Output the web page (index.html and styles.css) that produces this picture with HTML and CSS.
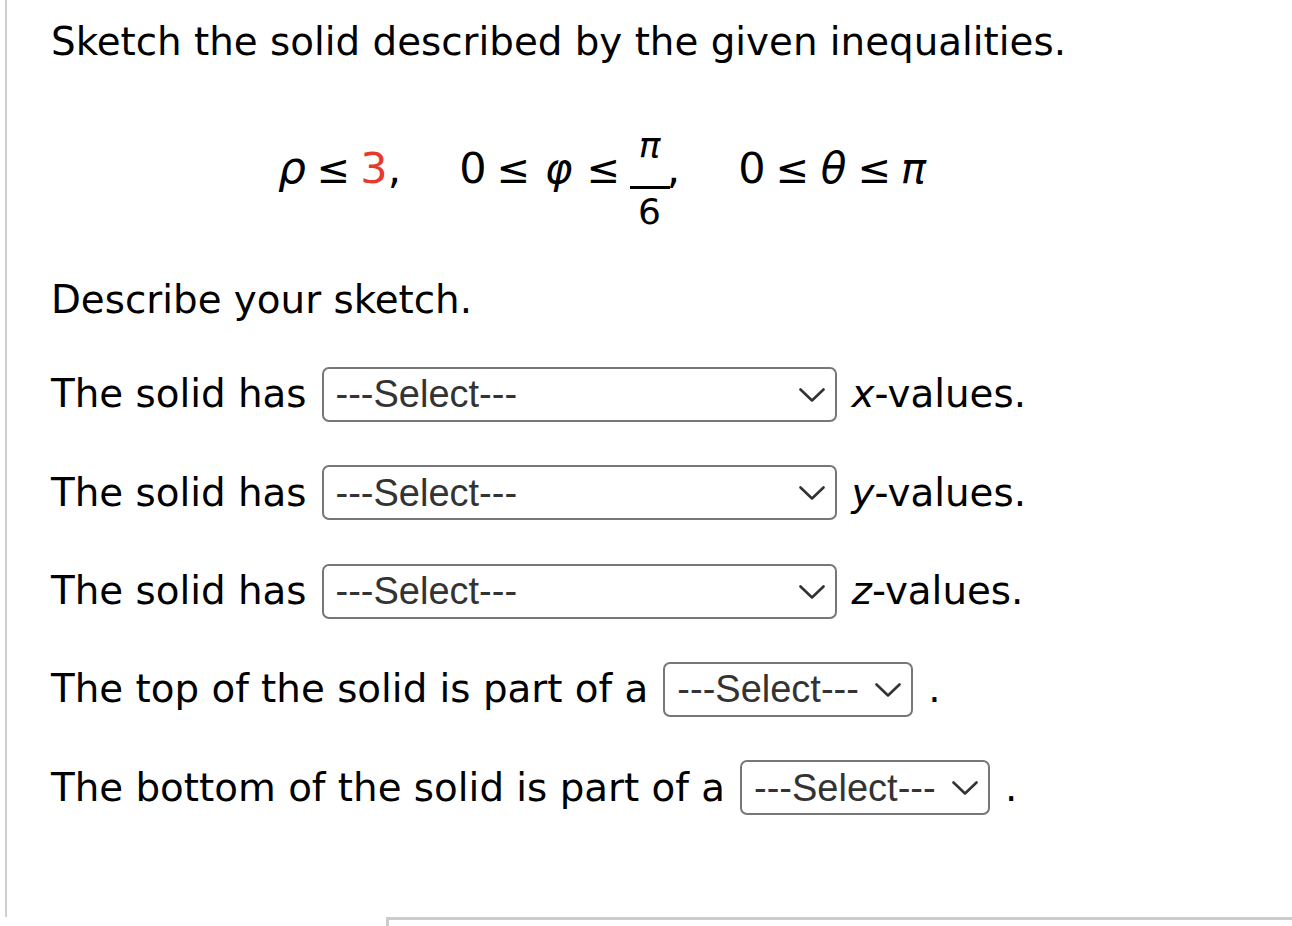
FILE: index.html
```html
<!DOCTYPE html>
<html lang="en">
<head>
<meta charset="utf-8">
<title>Sketch the solid</title>
<link rel="stylesheet" href="styles.css">
</head>
<body>
<div class="frame">
  <p class="title">Sketch the solid described by the given inequalities.</p>

  <div class="math">
    <span class="g w-rho first"><i>ρ</i></span><span class="g w-rel">≤</span><span class="g w-dig red">3</span><span class="g w-0">,</span><span class="g w-dig big">0</span><span class="g w-rel">≤</span><span class="g w-phi"><i>φ</i></span><span class="g w-rel">≤</span><span class="frac"><span class="num"><i>π</i></span><span class="bar"></span><span class="den">6</span></span><span class="g w-0 comma2">,</span><span class="g w-dig big">0</span><span class="g w-rel">≤</span><span class="g w-theta"><i>θ</i></span><span class="g w-rel">≤</span><span class="g w-pi"><i>π</i></span>
  </div>

  <p class="describe">Describe your sketch.</p>

  <div class="rows">
    <div class="row">
      <span class="label">The solid has</span>
      <span class="sel sel-wide">
        <select><option>---Select---</option></select>
        <svg class="chev" viewBox="0 0 26 14" aria-hidden="true"><path d="M1.5 1.5 L13 12.5 L24.5 1.5"/></svg>
      </span>
      <span class="label"><i>x</i>-values.</span>
    </div>
    <div class="row">
      <span class="label">The solid has</span>
      <span class="sel sel-wide">
        <select><option>---Select---</option></select>
        <svg class="chev" viewBox="0 0 26 14" aria-hidden="true"><path d="M1.5 1.5 L13 12.5 L24.5 1.5"/></svg>
      </span>
      <span class="label"><i>y</i>-values.</span>
    </div>
    <div class="row">
      <span class="label">The solid has</span>
      <span class="sel sel-wide">
        <select><option>---Select---</option></select>
        <svg class="chev" viewBox="0 0 26 14" aria-hidden="true"><path d="M1.5 1.5 L13 12.5 L24.5 1.5"/></svg>
      </span>
      <span class="label"><i>z</i>-values.</span>
    </div>
    <div class="row">
      <span class="label">The top of the solid is part of a</span>
      <span class="sel sel-small">
        <select><option>---Select---</option></select>
        <svg class="chev" viewBox="0 0 26 14" aria-hidden="true"><path d="M1.5 1.5 L13 12.5 L24.5 1.5"/></svg>
      </span>
      <span class="label dot">.</span>
    </div>
    <div class="row">
      <span class="label">The bottom of the solid is part of a</span>
      <span class="sel sel-small">
        <select><option>---Select---</option></select>
        <svg class="chev" viewBox="0 0 26 14" aria-hidden="true"><path d="M1.5 1.5 L13 12.5 L24.5 1.5"/></svg>
      </span>
      <span class="label dot">.</span>
    </div>
  </div>
</div>
<div class="footer"></div>
</body>
</html>
```

FILE: styles.css
```css
html, body {
  margin: 0;
  padding: 0;
  background: #ffffff;
}

body {
  font-family: "DejaVu Sans", Verdana, sans-serif;
  font-size: 38.8px;
  color: #000000;
  overflow: hidden;
}

.frame {
  box-sizing: border-box;
  height: 917px;
  margin-left: 5px;
  border-left: 2px solid #cfcfcf;
  padding-left: 44px;
  padding-top: 20px;
}

.title,
.describe {
  margin: 0;
  line-height: 44px;
  white-space: nowrap;
}

/* ---------- math line ---------- */
.math {
  margin-top: 63.5px;
  padding-left: 219.5px;
  font-size: 42px;
  line-height: 42px;
  white-space: nowrap;
}

.math i {
  font-style: italic;
}

.g {
  display: inline-flex;
  justify-content: center;
}

.w-rho { width: 43px; font-size: 44px; }
.w-rel { width: 40px; font-size: 40px; }
.w-dig { width: 41px; font-size: 43px; }
.w-phi { width: 50px; }
.w-theta { width: 42px; }
.w-pi { width: 38px; }
.w-0 { width: 0; }

.big { margin-left: 58px; }
.comma2 { margin-left: 4px; }

.red { color: #e8392b; }

.frac {
  display: inline-flex;
  flex-direction: column;
  align-items: center;
  width: 40px;
  margin-left: 6px;
  vertical-align: 25px;
}

.num,
.den {
  font-size: 36px;
  line-height: 36px;
}

.bar {
  align-self: stretch;
  height: 3px;
  background: #000;
  margin-top: 22.5px;
  margin-bottom: 4.5px;
}

.describe {
  margin-top: 48.35px;
}

/* ---------- answer rows ---------- */
.rows {
  margin-top: 45.15px;
  display: flex;
  flex-direction: column;
  gap: 43.33px;
}

.row {
  display: flex;
  align-items: center;
  gap: 15px;
  height: 55px;
  white-space: nowrap;
}

.label {
  line-height: 44px;
}

.sel {
  position: relative;
  display: inline-flex;
  flex: none;
}

.sel select {
  -webkit-appearance: none;
  appearance: none;
  box-sizing: border-box;
  height: 55px;
  margin: 0;
  padding: 0 0 0 12px;
  border: 2px solid #777777;
  border-radius: 7px;
  background: #ffffff;
  color: #333333;
  font-family: "Liberation Sans", Arial, sans-serif;
  font-size: 38px;
  outline: none;
}

.sel-wide select { width: 515px; }
.sel-small select { width: 250px; }

.chev {
  position: absolute;
  right: 12px;
  top: 21px;
  width: 26px;
  height: 14px;
  pointer-events: none;
}

.chev path {
  fill: none;
  stroke: #333333;
  stroke-width: 2.6;
  stroke-linecap: round;
  stroke-linejoin: round;
}

.footer {
  box-sizing: border-box;
  margin-left: 386px;
  height: 9px;
  border-top: 3px solid #cccccc;
  border-left: 3px solid #cccccc;
}
```
